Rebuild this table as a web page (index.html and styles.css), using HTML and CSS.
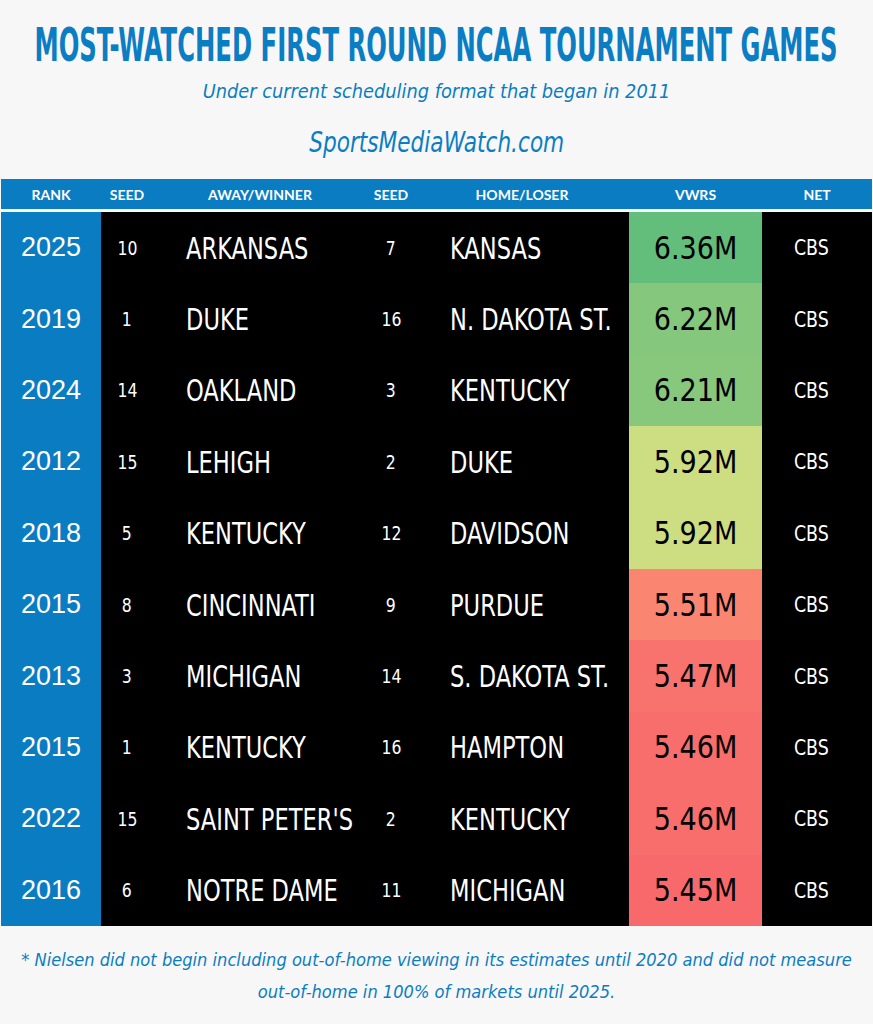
FILE: index.html
```html
<!DOCTYPE html>
<html lang="en">
<head>
<meta charset="utf-8">
<title>Most-Watched First Round NCAA Tournament Games</title>
<link rel="stylesheet" href="styles.css">
</head>
<body>
<div class="page">
  <header class="intro">
    <h1 class="title"><span class="title-text">MOST-WATCHED FIRST ROUND NCAA TOURNAMENT GAMES</span></h1>
    <p class="subtitle">Under current scheduling format that began in 2011</p>
    <p class="site"><span class="site-text">SportsMediaWatch.com</span></p>
  </header>

  <table class="board">
    <colgroup>
      <col class="c-rank"><col class="c-seed"><col class="c-team"><col class="c-seed2"><col class="c-team"><col class="c-vw"><col class="c-net">
    </colgroup>
    <thead>
      <tr>
        <th>RANK</th><th>SEED</th><th>AWAY/WINNER</th><th>SEED</th><th>HOME/LOSER</th><th>VWRS</th><th>NET</th>
      </tr>
    </thead>
    <tbody>
      <tr><td class="rank">2025</td><td class="seed"><span>10</span></td><td class="team"><span>ARKANSAS</span></td><td class="seed"><span>7</span></td><td class="team home"><span>KANSAS</span></td><td class="vw" style="background:#63be7b"><span>6.36M</span></td><td class="net"><span>CBS</span></td></tr>
      <tr><td class="rank">2019</td><td class="seed"><span>1</span></td><td class="team"><span>DUKE</span></td><td class="seed"><span>16</span></td><td class="team home"><span>N. DAKOTA ST.</span></td><td class="vw" style="background:#85c87d"><span>6.22M</span></td><td class="net"><span>CBS</span></td></tr>
      <tr><td class="rank">2024</td><td class="seed"><span>14</span></td><td class="team"><span>OAKLAND</span></td><td class="seed"><span>3</span></td><td class="team home"><span>KENTUCKY</span></td><td class="vw" style="background:#87c87d"><span>6.21M</span></td><td class="net"><span>CBS</span></td></tr>
      <tr><td class="rank">2012</td><td class="seed"><span>15</span></td><td class="team"><span>LEHIGH</span></td><td class="seed"><span>2</span></td><td class="team home"><span>DUKE</span></td><td class="vw" style="background:#cddd81"><span>5.92M</span></td><td class="net"><span>CBS</span></td></tr>
      <tr><td class="rank">2018</td><td class="seed"><span>5</span></td><td class="team"><span>KENTUCKY</span></td><td class="seed"><span>12</span></td><td class="team home"><span>DAVIDSON</span></td><td class="vw" style="background:#cddd81"><span>5.92M</span></td><td class="net"><span>CBS</span></td></tr>
      <tr><td class="rank">2015</td><td class="seed"><span>8</span></td><td class="team"><span>CINCINNATI</span></td><td class="seed"><span>9</span></td><td class="team home"><span>PURDUE</span></td><td class="vw" style="background:#fa8671"><span>5.51M</span></td><td class="net"><span>CBS</span></td></tr>
      <tr><td class="rank">2013</td><td class="seed"><span>3</span></td><td class="team"><span>MICHIGAN</span></td><td class="seed"><span>14</span></td><td class="team home"><span>S. DAKOTA ST.</span></td><td class="vw" style="background:#f8736d"><span>5.47M</span></td><td class="net"><span>CBS</span></td></tr>
      <tr><td class="rank">2015</td><td class="seed"><span>1</span></td><td class="team"><span>KENTUCKY</span></td><td class="seed"><span>16</span></td><td class="team home"><span>HAMPTON</span></td><td class="vw" style="background:#f86e6c"><span>5.46M</span></td><td class="net"><span>CBS</span></td></tr>
      <tr><td class="rank">2022</td><td class="seed"><span>15</span></td><td class="team"><span>SAINT PETER'S</span></td><td class="seed"><span>2</span></td><td class="team home"><span>KENTUCKY</span></td><td class="vw" style="background:#f86e6c"><span>5.46M</span></td><td class="net"><span>CBS</span></td></tr>
      <tr><td class="rank">2016</td><td class="seed"><span>6</span></td><td class="team"><span>NOTRE DAME</span></td><td class="seed"><span>11</span></td><td class="team home"><span>MICHIGAN</span></td><td class="vw" style="background:#f8696b"><span>5.45M</span></td><td class="net"><span>CBS</span></td></tr>
    </tbody>
  </table>

  <p class="note">* Nielsen did not begin including out-of-home viewing in its estimates until 2020 and did not measure<br>out-of-home in 100% of markets until 2025.</p>
</div>
</body>
</html>
```
FILE: styles.css
```css
html, body {
  margin: 0;
  padding: 0;
  background: #f7f7f7;
}

.page {
  width: 873px;
  height: 1024px;
  overflow: hidden;
  background: #f7f7f7;
  font-family: "DejaVu Sans Condensed", "Liberation Sans Narrow", "Liberation Sans", sans-serif;
}

.intro {
  text-align: center;
  color: #0b7dc3;
  padding-top: 17px;
}

.title {
  margin: 0;
  height: 56px;
  display: flex;
  justify-content: center;
  align-items: center;
  line-height: 56px;
  font-size: 46px;
  font-weight: 700;
  white-space: nowrap;
}

.title-text {
  display: inline-block;
  flex: none;
  transform: scaleX(0.587);
  transform-origin: center;
}

.subtitle {
  margin: 0;
  line-height: 37px;
  font-size: 19.8px;
  font-style: italic;
}

.site {
  margin: 14px 0 0;
  line-height: 36px;
  font-size: 27.5px;
  font-style: italic;
  white-space: nowrap;
}

.site-text {
  display: inline-block;
  transform: scaleX(0.875);
}

.board {
  margin: 19px 0 0 1px;
  width: 871px;
  table-layout: fixed;
  border-collapse: collapse;
  border-spacing: 0;
}

.c-rank { width: 100px; }
.c-seed { width: 52px; }
.c-team { width: 214px; }
.c-seed2 { width: 48px; }
.c-vw { width: 133px; }
.c-net { width: 110px; }

.board th {
  background: #0a7cc1;
  color: #ffffff;
  height: 30px;
  padding: 0;
  border-bottom: 3px solid #ffffff;
  font-family: "Lato", "Liberation Sans", sans-serif;
  font-weight: 700;
  font-size: 14px;
  text-align: center;
  vertical-align: middle;
}

.board td {
  height: 71.4px;
  padding: 0;
  background: #000000;
  color: #ffffff;
  text-align: center;
  vertical-align: middle;
  white-space: nowrap;
}

.board td span {
  display: inline-block;
}

.board td.rank {
  background: #0a7cc2;
  font-family: "Liberation Sans", sans-serif;
  font-size: 27px;
}

.board td.seed {
  font-size: 20px;
}

.board td.seed span {
  transform: scaleX(0.87);
}

.board td.team {
  text-align: left;
  padding-left: 33px;
  font-size: 31px;
}

.board td.team span {
  transform: scaleX(0.81);
  transform-origin: left center;
}

.board td.home {
  padding-left: 35px;
}

.board td.vw {
  color: #000000;
  font-size: 32px;
}

.board td.vw span {
  transform: scaleX(0.94);
}

.board td.net {
  padding-right: 12px;
  font-size: 21.5px;
}

.board td.net span {
  transform: scaleX(0.9);
}

.note {
  margin: 18px 0 0;
  padding: 0 8px;
  text-align: center;
  color: #0b7dc3;
  font-style: italic;
  font-size: 18.1px;
  line-height: 32px;
  white-space: nowrap;
}
```
